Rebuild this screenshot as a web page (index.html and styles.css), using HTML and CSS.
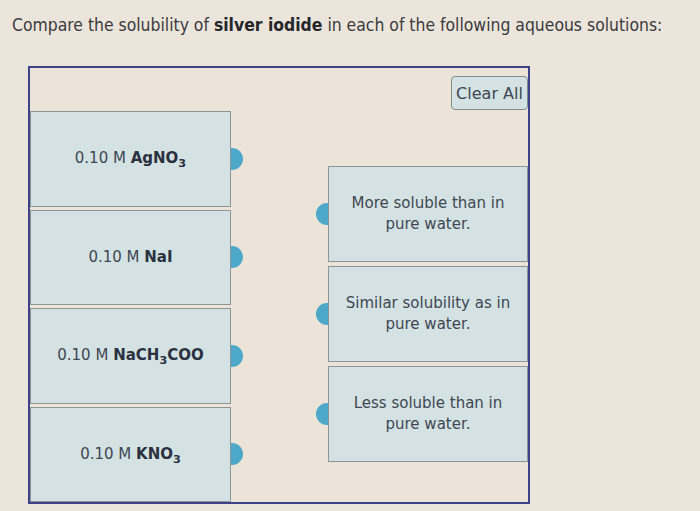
FILE: index.html
```html
<!DOCTYPE html>
<html>
<head>
<meta charset="utf-8">
<link rel="stylesheet" href="styles.css">
</head>
<body>
<div class="page">
  <p class="prompt">Compare the solubility of <b>silver iodide</b> in each of the following aqueous solutions:</p>
  <div class="board">
    <div class="col col-left">
      <div class="card src"><span>0.10 M <b>AgNO<sub>3</sub></b></span></div>
      <div class="card src"><span>0.10 M <b>NaI</b></span></div>
      <div class="card src"><span>0.10 M <b>NaCH<sub>3</sub>COO</b></span></div>
      <div class="card src"><span>0.10 M <b>KNO<sub>3</sub></b></span></div>
    </div>
    <div class="col col-right">
      <button class="clear" type="button">Clear All</button>
      <div class="targets">
        <div class="card dst"><span>More soluble than in pure water.</span></div>
        <div class="card dst"><span>Similar solubility as in pure water.</span></div>
        <div class="card dst"><span>Less soluble than in pure water.</span></div>
      </div>
    </div>
  </div>
</div>
</body>
</html>
```

FILE: styles.css
```css
html, body {
  margin: 0;
  padding: 0;
  background: #ece5dc;
}

body {
  font-family: "DejaVu Sans", Verdana, sans-serif;
  color: #404753;
  width: 700px;
  height: 511px;
  overflow: hidden;
}

.page {
  padding: 14px 0 0 12px;
}

.prompt {
  margin: 0;
  font-family: "DejaVu Sans Condensed", "DejaVu Sans", sans-serif;
  font-size: 17.4px;
  line-height: 22px;
  color: #3a3a3c;
}

.prompt b {
  color: #26272b;
}

.board {
  box-sizing: border-box;
  margin: 30px 0 0 16px;
  width: 502px;
  height: 438px;
  border: 2px solid #3d4288;
  background: #ece4d9;
  display: flex;
  justify-content: space-between;
}

.col {
  display: flex;
  flex-direction: column;
}

.col-left {
  padding-top: 43px;
  gap: 3px;
}

.col-right {
  align-items: flex-end;
}

.targets {
  margin-top: 56px;
  display: flex;
  flex-direction: column;
  gap: 4px;
}

.card {
  position: relative;
  box-sizing: border-box;
  height: 96px;
  background: #d4e2e3;
  border: 1px solid #8d9697;
  display: flex;
  align-items: center;
  justify-content: center;
  text-align: center;
  font-size: 15px;
  line-height: 21px;
}

.src {
  width: 201px;
}

.dst {
  width: 200px;
  padding: 0 14px;
}

.card b {
  color: #2b3140;
}

.card sub {
  font-size: 0.75em;
  vertical-align: -0.35em;
  line-height: 0;
}

.src::after,
.dst::before {
  content: "";
  position: absolute;
  top: 50%;
  width: 12px;
  height: 22px;
  margin-top: -11px;
  background: #4da8c9;
}

.src::after {
  right: -13px;
  border-radius: 0 11px 11px 0;
}

.dst::before {
  left: -13px;
  border-radius: 11px 0 0 11px;
}

.clear {
  margin-top: 8px;
  box-sizing: border-box;
  width: 77px;
  height: 34px;
  padding: 0;
  font-family: "DejaVu Sans", sans-serif;
  font-size: 16px;
  color: #404753;
  background: #d4e2e3;
  border: 1px solid #7f8b8d;
  border-radius: 4px;
}
```
